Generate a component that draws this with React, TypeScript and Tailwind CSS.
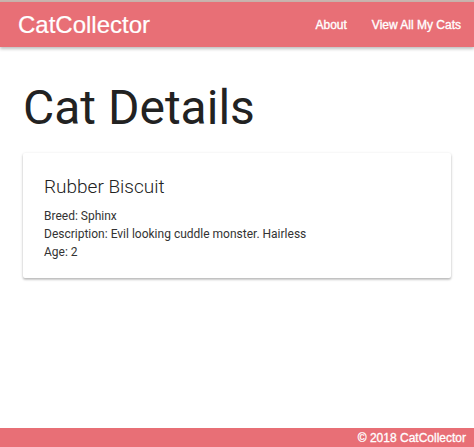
import React from "react";

const details = [
  { label: "Breed", value: "Sphinx" },
  { label: "Description", value: "Evil looking cuddle monster. Hairless" },
  { label: "Age", value: "2" },
];

export default function App() {
  return (
    <div
      className="flex h-[447px] w-full flex-col overflow-hidden bg-white"
      style={{ fontFamily: "Roboto, 'Liberation Sans', Arial, sans-serif" }}
    >
      <div className="h-[2px] bg-[#c9b4ae]" />
      <nav className="relative z-10 flex h-[45px] items-center justify-between bg-[#e86f76] pl-[18px] pr-[13px] shadow-[0_2px_3px_rgba(0,0,0,0.25)]">
        <a className="text-[24px] leading-none text-white font-['Liberation_Sans',Arial,sans-serif] [-webkit-text-stroke:0.2px_white]">
          CatCollector
        </a>
        <ul className="flex items-center gap-[25px] text-[12px] text-white font-['Liberation_Sans',Arial,sans-serif] [-webkit-text-stroke:0.35px_white]">
          <li>About</li>
          <li>View All My Cats</li>
        </ul>
      </nav>

      <main className="px-[23px]">
        <h1 className="mt-[34px] mb-[19px] text-[48px] font-normal leading-[53px] text-[#222]">
          Cat Details
        </h1>
        <div className="rounded-[2px] bg-white pl-[21px] pr-[20px] pt-[21px] pb-[17px] shadow-[0_1px_3px_rgba(0,0,0,0.22),0_2px_2px_rgba(0,0,0,0.12)]">
          <div className="mb-[7px] text-[19px] font-light leading-[26px] text-[#222]">
            Rubber Biscuit
          </div>
          {details.map((d) => (
            <p key={d.label} className="text-[12px] leading-[18px] text-[#333]">
              {d.label}: {d.value}
            </p>
          ))}
        </div>
      </main>

      <footer className="mt-auto flex h-[19px] items-center justify-end bg-[#e86f76] pr-[8px] text-[12px] text-white font-['Liberation_Sans',Arial,sans-serif] [-webkit-text-stroke:0.3px_white]">
        © 2018 CatCollector
      </footer>
    </div>
  );
}
